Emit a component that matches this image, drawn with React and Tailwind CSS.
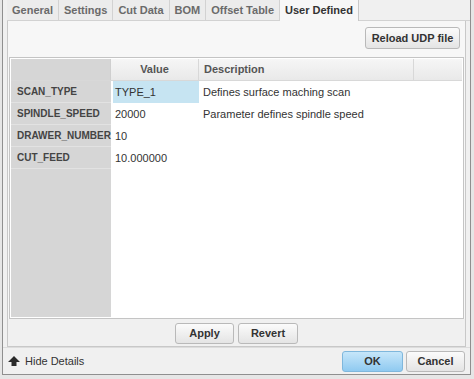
export default function App() {
  const tabs = ["General", "Settings", "Cut Data", "BOM", "Offset Table"];
  const rows = [
    ["SCAN_TYPE", "TYPE_1", "Defines surface maching scan", true],
    ["SPINDLE_SPEED", "20000", "Parameter defines spindle speed", false],
    ["DRAWER_NUMBER", "10", "", false],
    ["CUT_FEED", "10.000000", "", false],
  ];
  const btn =
    "h-[21px] rounded-[3px] border border-[#b9b9b9] bg-gradient-to-b from-[#fbfbfb] to-[#e4e4e4] text-[11px] font-bold text-[#333] flex items-center justify-center";
  return (
    <div
      className="w-[474px] h-[379px] bg-[#e6e6e6] pl-[2px] pr-[3px] pb-[4px] flex"
      style={{ fontFamily: '"Liberation Sans", Arial, sans-serif' }}
    >
      <div className="flex-1 flex flex-col border-l border-r border-b border-[#8f8f8f] bg-[#f0f0f0]">
        {/* tabs */}
        <div className="flex h-[21px] pl-[4px] items-end">
          {tabs.map((t) => (
            <div
              key={t}
              className="h-[21px] px-[5px] flex items-center border-r border-b border-[#d2d2d2] bg-[#ececec] text-[11px] font-bold text-[#6a6a6a]"
            >
              {t}
            </div>
          ))}
          <div className="h-[21px] px-[5px] flex items-center border-r border-[#c8c8c8] bg-[#f7f7f7] text-[11px] font-bold text-[#333]">
            User Defined
          </div>
          <div className="flex-1 h-[21px] border-b border-[#d2d2d2]" />
        </div>
        {/* pane */}
        <div className="mx-[4px] h-[326px] flex flex-col border-l border-r border-b border-[#c8c8c8] bg-[#f7f7f7]">
          <div className="flex justify-end pt-[6px] pr-[5px]">
            <div className={btn + " w-[95px] h-[22px]"}>Reload UDP file</div>
          </div>
          <div className="mx-[1px] mt-[8px] h-[262px] border border-[#c4c4c4] bg-white flex flex-col text-[11px] p-[1px]">
            <div className="grid grid-cols-[100px_88px_215px_1fr] h-[22px] bg-gradient-to-b from-[#f6f6f6] to-[#e9e9e9] border-b border-[#d8d8d8]">
              <div className="bg-[#d6d6d6] border-r border-[#cfcfcf]" />
              <div className="flex items-center justify-center font-bold text-[#555] border-r border-[#d8d8d8]">
                Value
              </div>
              <div className="flex items-center pl-[5px] font-bold text-[#555] border-r border-[#d8d8d8]">
                Description
              </div>
              <div />
            </div>
            {rows.map(([k, v, d, sel]) => (
              <div key={k} className="grid grid-cols-[100px_88px_215px_1fr] h-[22px]">
                <div className="bg-[#d6d6d6] border-b border-[#e2e2e2] flex items-center pl-[6px] text-[10px] font-bold text-[#444]">
                  {k}
                </div>
                <div
                  className={
                    "flex items-center pl-[2px] ml-[2px] text-[#333] " +
                    (sel ? "bg-[#c6e4f2]" : "")
                  }
                >
                  {v}
                </div>
                <div className="flex items-center pl-[4px] text-[#333]">{d}</div>
                <div />
              </div>
            ))}
            <div className="flex-1 grid grid-cols-[100px_1fr]">
              <div className="bg-[#d6d6d6]" />
              <div />
            </div>
          </div>
          <div className="flex-1 flex items-center justify-center gap-[4px] bg-[#f0f0f0] pt-[1px]">
            <div className={btn + " w-[59px]"}>Apply</div>
            <div className={btn + " w-[60px]"}>Revert</div>
          </div>
        </div>
        {/* bottom bar */}
        <div className="flex-1 flex items-center pl-[5px] pr-[5px] border-t border-[#dcdcdc]">
          <svg width="12" height="11" viewBox="0 0 12 11" className="mr-[5px]">
            <path d="M6 0 L12 6 L8.5 6 L8.5 10 L3.5 10 L3.5 6 L0 6 Z" fill="#2a2a2a" />
          </svg>
          <span className="text-[11px] text-[#333]">Hide Details</span>
          <div className="flex-1" />
          <div className="w-[61px] h-[21px] rounded-[3px] border border-[#7fb7dc] bg-gradient-to-b from-[#c6e6fa] to-[#8fcaf0] text-[11px] font-bold text-[#333] flex items-center justify-center mr-[3px]">
            OK
          </div>
          <div className={btn + " w-[59px]"}>Cancel</div>
        </div>
      </div>
    </div>
  );
}
